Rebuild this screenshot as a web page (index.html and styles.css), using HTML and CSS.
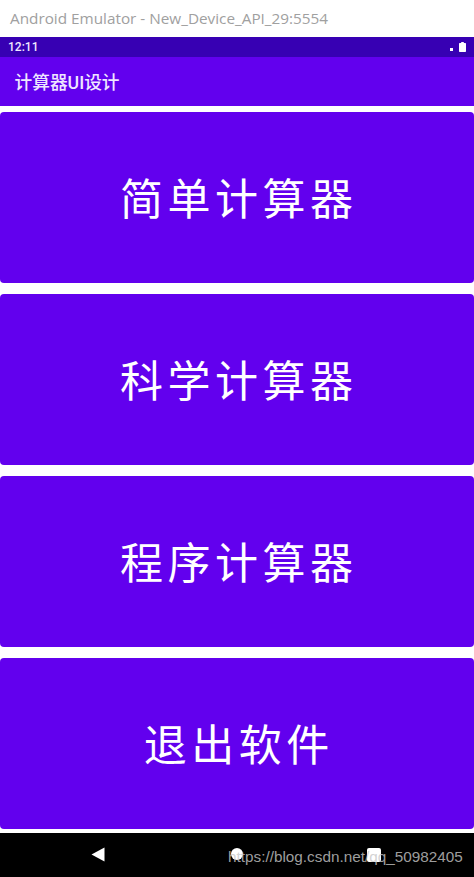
FILE: index.html
```html
<!DOCTYPE html>
<html lang="zh">
<head>
<meta charset="utf-8">
<title>计算器UI设计</title>
<link rel="stylesheet" href="styles.css">
</head>
<body>
<div class="window-title">Android Emulator - New_Device_API_29:5554</div>
<div class="status-bar">
  <span class="time">12:11</span>
  <span class="status-icons">
    <span class="dot"></span>
    <svg class="battery" viewBox="0 0 7 10" width="7" height="10"><path d="M2.2 0h2.6v1H6.3a.7.7 0 0 1 .7.7v7.6a.7.7 0 0 1-.7.7H.7a.7.7 0 0 1-.7-.7V1.700a.7.7 0 0 1 .7-.7h1.500z" fill="#fff"/></svg>
  </span>
</div>
<div class="app-bar">计算器UI设计</div>
<main class="buttons">
  <button class="calc-btn">简单计算器</button>
  <button class="calc-btn">科学计算器</button>
  <button class="calc-btn">程序计算器</button>
  <button class="calc-btn">退出软件</button>
</main>
<nav class="nav-bar">
  <svg class="nav-back" viewBox="0 0 14 15" width="14" height="15"><path d="M13.500 0.500V14.500L0.500 7.500z" fill="#fff"/></svg>
  <span class="nav-home"></span>
  <span class="nav-recent"></span>
  <span class="watermark">https://blog.csdn.net/qq_50982405</span>
</nav>
</body>
</html>
```
FILE: styles.css
```css
* { box-sizing: border-box; }
html, body { margin: 0; padding: 0; }
body {
  width: 474px;
  height: 877px;
  overflow: hidden;
  background: #fff;
  font-family: "Noto Sans CJK SC", "Noto Sans", sans-serif;
  display: flex;
  flex-direction: column;
}
.window-title {
  height: 37px;
  flex: none;
  padding: 0 0 0 10px;
  display: flex;
  align-items: center;
  font: 15.300px/1 "Open Sans", "Noto Sans", sans-serif;
  color: #a0a0a0;
  background: #fff;
}
.status-bar {
  height: 20px;
  flex: none;
  background: #3700b3;
  color: #f0e8ff;
  display: flex;
  align-items: center;
  justify-content: space-between;
  padding: 0 8px;
}
.time { font: 500 12px/1 Roboto, sans-serif; }
.status-icons { display: flex; align-items: flex-end; gap: 6px; }
.dot { width: 3px; height: 3px; background: #fff; margin-bottom: 1px; }
.battery { display: block; }
.app-bar {
  height: 49px;
  flex: none;
  background: #6200ee;
  color: #efe6ff;
  display: flex;
  align-items: center;
  padding: 0 0 1px 14.500px;
  font-family: Roboto, "Noto Sans CJK SC", sans-serif;
  font-size: 17.700px;
  font-weight: 500;
}
.buttons {
  flex: none;
  height: 727px;
  padding-top: 6px;
  display: flex;
  flex-direction: column;
  gap: 11px;
}
.calc-btn {
  height: 171px;
  flex: none;
  width: 100%;
  border: 0;
  border-radius: 4px;
  background: #6200ee;
  color: #fff;
  font-family: "Noto Sans CJK SC", sans-serif;
  font-size: 43px;
  font-weight: 400;
  letter-spacing: 4.500px;
  padding: 0 0 4px 3.500px;
}
.nav-bar {
  flex: none;
  height: 44px;
  background: #000;
  position: relative;
}
.nav-back { position: absolute; left: 91px; top: 14px; }
.nav-home {
  position: absolute; left: 231px; top: 15px;
  width: 12px; height: 12px; border-radius: 50%; background: #fff;
}
.nav-recent {
  position: absolute; left: 367px; top: 15px;
  width: 14px; height: 14px; border-radius: 2px; background: #fff;
}
.watermark {
  position: absolute; left: 228px; top: 15px;
  font: 15.300px/1.2 "Liberation Sans", Arial, sans-serif;
  color: rgba(200,200,200,.8);
  white-space: nowrap;
}
```
